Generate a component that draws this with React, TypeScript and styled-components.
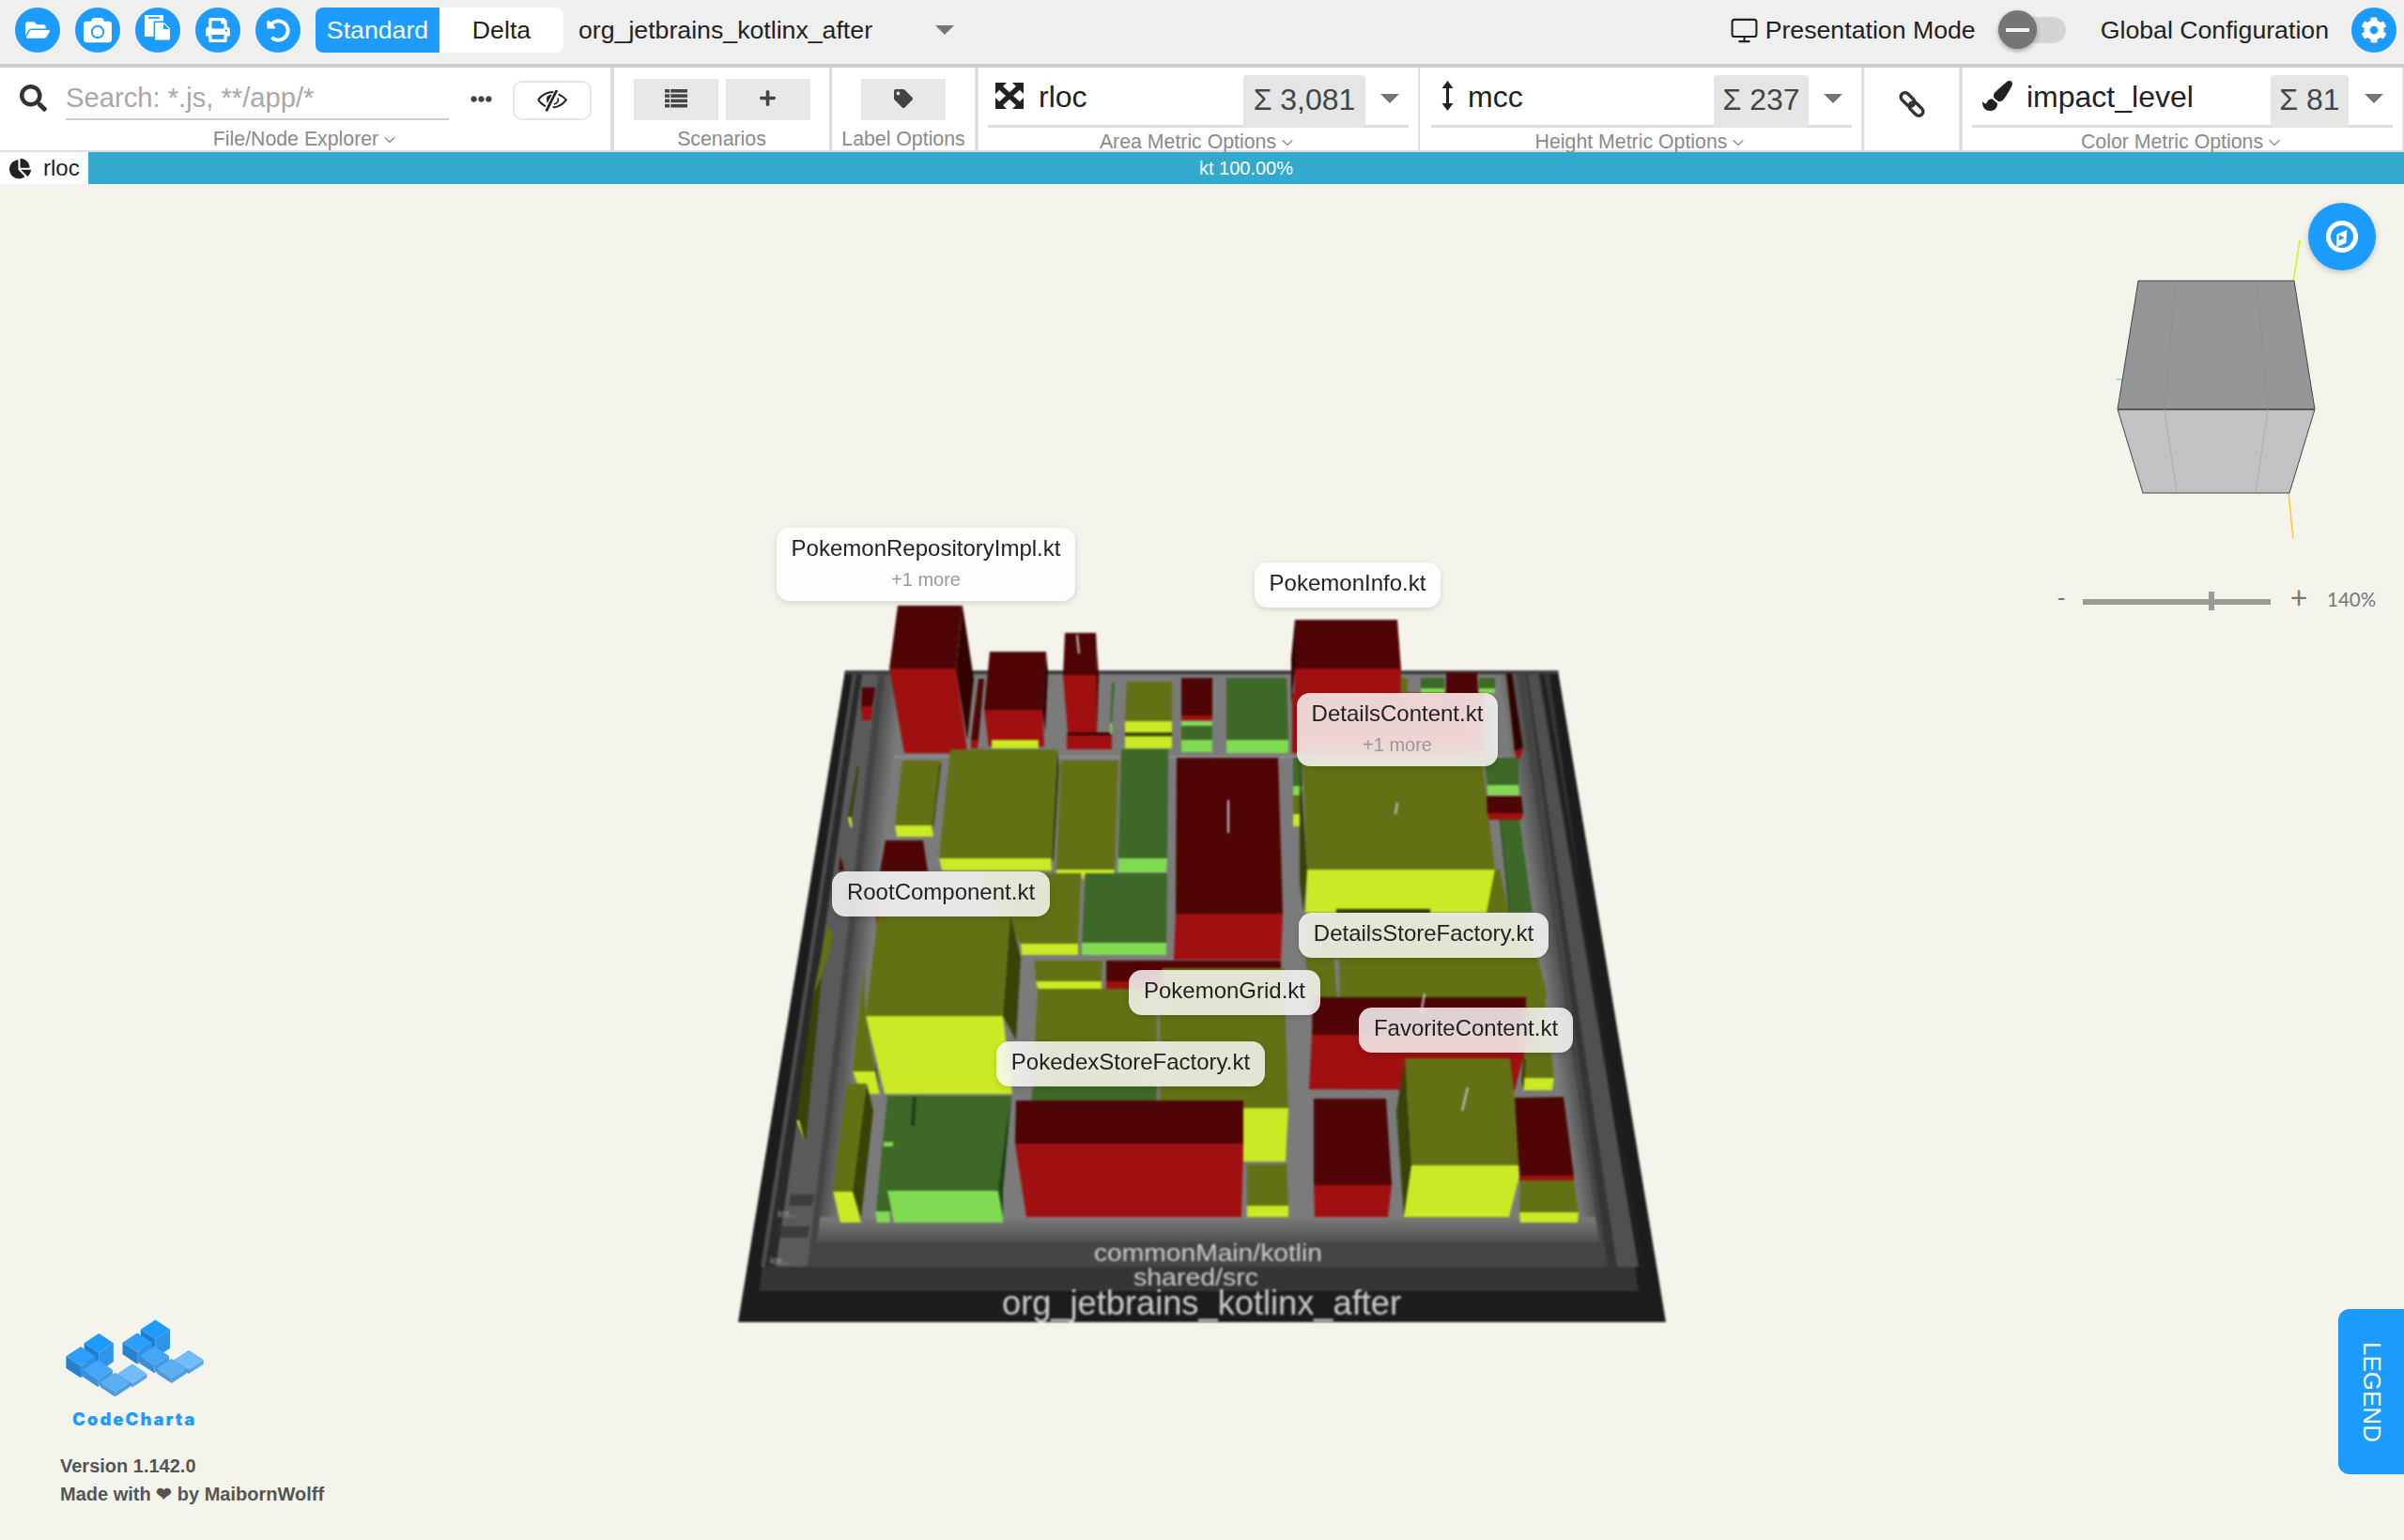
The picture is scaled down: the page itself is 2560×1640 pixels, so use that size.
import React from "react";
import styled, { createGlobalStyle } from "styled-components";
import {
  FaFolderOpen,
  FaCamera,
  FaPrint,
  FaUndoAlt,
  FaCog,
  FaSearch,
  FaEllipsisH,
  FaPlus,
  FaTag,
  FaPaintBrush,
  FaChartPie,
} from "react-icons/fa";
import { ChevronDown, Monitor } from "lucide-react";

const BLUE = "#1c9cff";

const GlobalStyle = createGlobalStyle`
  html, body { margin: 0; padding: 0; background: #f4f4ec; }
  body { font-family: "Liberation Sans", Arial, sans-serif; color: #222; }
  * { box-sizing: border-box; }
`;

const Page = styled.div`
  width: 2560px;
  height: 1640px;
  display: flex;
  flex-direction: column;
  overflow: hidden;
`;

/* ---------- top bar ---------- */
const TopBar = styled.div`
  height: 72px;
  flex: none;
  display: flex;
  align-items: center;
  gap: 16px;
  padding: 0 8px 4px 16px;
  background: #efefef;
  border-bottom: 4px solid #ccc;
`;

const RoundButton = styled.button<{ $size?: number }>`
  width: 48px;
  height: 48px;
  flex: none;
  border: none;
  border-radius: 50%;
  background: ${BLUE};
  color: #fff;
  font-size: ${(p) => p.$size ?? 28}px;
  padding: 0;
  display: flex;
  align-items: center;
  justify-content: center;
`;

const Segment = styled.div`
  display: flex;
  height: 48px;
  width: 264px;
  border-radius: 8px;
  overflow: hidden;
  background: #fff;
`;

const SegmentItem = styled.div<{ $active?: boolean }>`
  width: 132px;
  display: flex;
  align-items: center;
  justify-content: center;
  font-size: 26.7px;
  background: ${(p) => (p.$active ? BLUE : "#fff")};
  color: ${(p) => (p.$active ? "#fff" : "#222")};
`;

const FileSelect = styled.div`
  width: 400px;
  display: flex;
  align-items: center;
  justify-content: space-between;
  font-size: 26.7px;
`;

const Caret = styled.span`
  width: 0;
  height: 0;
  flex: none;
  border-left: 10px solid transparent;
  border-right: 10px solid transparent;
  border-top: 10px solid #757575;
`;

const MetricCaret = styled(Caret)`
  margin: -4px 10px 0 0;
`;

const RightTools = styled.div`
  margin-left: auto;
  display: flex;
  align-items: center;
  font-size: 26.7px;
`;

const PresentationLabel = styled.div`
  display: flex;
  align-items: center;
  gap: 7px;
  margin-right: 24px;
`;

const SwitchTrack = styled.div`
  position: relative;
  width: 72px;
  height: 28px;
  border-radius: 14px;
  background: #d4d4d4;
  margin-right: 37px;
`;

const SwitchThumb = styled.div`
  position: absolute;
  left: 0;
  top: -7px;
  width: 41px;
  height: 41px;
  border-radius: 50%;
  background: #757575;
  box-shadow: 0 2px 5px rgba(0, 0, 0, 0.35);
  display: flex;
  align-items: center;
  justify-content: center;
  &::after {
    content: "";
    width: 25px;
    height: 4px;
    background: #f4f4f4;
  }
`;

const GlobalLabel = styled.div`
  margin-right: 24px;
`;

/* ---------- panel row ---------- */
const PanelRow = styled.div`
  height: 90px;
  flex: none;
  display: flex;
  background: #fff;
  border-bottom: 2px solid #ddd;
`;

const Panel = styled.section<{ $w: number; $border: number; $left?: number; $right?: number }>`
  width: ${(p) => p.$w}px;
  flex: none;
  display: flex;
  flex-direction: column;
  border-right: ${(p) => p.$border}px solid #ddd;
  padding: 0 ${(p) => p.$right ?? 0}px 0 ${(p) => p.$left ?? 0}px;
`;

const Caption = styled.div<{ $low?: boolean }>`
  margin-top: auto;
  height: 24px;
  line-height: 24px;
  margin-bottom: ${(p) => (p.$low ? -3 : 0)}px;
  text-align: center;
  font-size: 21.3px;
  color: #8a8a8a;
  white-space: nowrap;
  svg { margin-left: 2px; vertical-align: -4px; }
`;

const SearchRow = styled.div`
  display: flex;
  align-items: flex-start;
  height: 57px;
  padding-left: 19px;
  padding-top: 16px;
  color: #333;
`;

const SearchGlass = styled.div`
  width: 29px;
  height: 29px;
  margin-top: 2px;
  font-size: 29px;
  line-height: 0;
`;

const SearchField = styled.input`
  width: 408px;
  height: 40px;
  margin: 0 22px 0 20px;
  padding: 0 0 5px 0;
  border: none;
  border-bottom: 2px solid #ccc;
  outline: none;
  background: transparent;
  font: 29.2px "Liberation Sans", Arial, sans-serif;
  &::placeholder { color: #a8a8a8; opacity: 1; }
`;

const DotsIcon = styled.div`
  width: 24px;
  height: 34px;
  font-size: 23px;
  color: #444;
  display: flex;
  align-items: center;
  justify-content: center;
`;

const EyeButton = styled.button`
  width: 84px;
  height: 42px;
  margin: -2px 0 0 22px;
  padding: 0;
  border: 2px solid #e4e4e4;
  border-radius: 10px;
  background: #fff;
  color: #222;
  display: flex;
  align-items: center;
  justify-content: center;
`;

const ButtonRow = styled.div`
  display: flex;
  justify-content: center;
  gap: 8px;
  margin-top: 12px;
`;

const GreyButton = styled.div<{ $size?: number }>`
  width: 90px;
  height: 44px;
  background: #e8e8e8;
  color: #444;
  font-size: ${(p) => p.$size ?? 20}px;
  padding-bottom: 3px;
  display: flex;
  align-items: center;
  justify-content: center;
`;

const MetricHead = styled.div`
  margin-top: 8px;
  height: 56px;
  display: flex;
  align-items: center;
  border-bottom: 3px solid #ddd;
  color: #222;
`;

const MetricIcon = styled.div<{ $w: number; $left: number }>`
  width: ${(p) => p.$w}px;
  margin-left: ${(p) => p.$left}px;
  flex: none;
  display: flex;
  justify-content: center;
  font-size: 32px;
  margin-top: -10px;
`;

const MetricName = styled.div<{ $left: number }>`
  margin-left: ${(p) => p.$left}px;
  margin-top: -6px;
  font-size: 32px;
`;

const SumBox = styled.div<{ $w: number; $right: number }>`
  width: ${(p) => p.$w}px;
  margin: 0 ${(p) => p.$right}px -3px auto;
  height: 56px;
  flex: none;
  padding-bottom: 4px;
  border-radius: 4px 4px 0 0;
  background: #e5e5e5;
  color: #444;
  font-size: 32px;
  display: flex;
  align-items: center;
  justify-content: center;
`;

const LinkIcon = styled.div`
  height: 78px;
  display: flex;
  align-items: center;
  justify-content: center;
`;

/* ---------- status strip ---------- */
const MetricStrip = styled.div`
  height: 34px;
  flex: none;
  display: flex;
  background: #33a9cd;
`;

const StripTab = styled.div`
  width: 94px;
  flex: none;
  display: flex;
  align-items: center;
  gap: 13px;
  padding-left: 10px;
  background: #fff;
  color: #222;
  font-size: 24px;
  svg { font-size: 23px; }
`;

const StripValue = styled.div`
  flex: 1;
  display: flex;
  align-items: center;
  justify-content: center;
  color: #fff;
  font-size: 20px;
`;

/* ---------- canvas ---------- */
const Canvas = styled.main`
  position: relative;
  flex: 1;
  background: #f4f4ec;
`;

const MapDrawing = styled.svg`
  position: absolute;
  inset: 0;
  width: 2560px;
  height: 1444px;
  filter: blur(0.8px);
`;

const CubeDrawing = styled.svg`
  position: absolute;
  inset: 0;
  width: 2560px;
  height: 1444px;
`;

const Bubble = styled.div<{ $x: number; $y: number; $w: number; $h: number }>`
  position: absolute;
  left: ${(p) => p.$x}px;
  top: ${(p) => p.$y - 196}px;
  width: ${(p) => p.$w}px;
  height: ${(p) => p.$h}px;
  border-radius: 14px;
  background: rgba(255, 255, 255, 0.82);
  backdrop-filter: blur(8px);
  box-shadow: 0 2px 6px rgba(0, 0, 0, 0.14);
  display: flex;
  flex-direction: column;
  align-items: center;
  padding-top: 8px;
  font-size: 24px;
  line-height: 28px;
  color: #222;
  white-space: nowrap;
`;

const BubbleMore = styled.div`
  margin-top: 6px;
  font-size: 20px;
  line-height: 26px;
  color: #999;
`;

const CompassButton = styled.button`
  position: absolute;
  right: 30px;
  top: 20px;
  width: 72px;
  height: 72px;
  border: none;
  border-radius: 50%;
  padding: 0;
  background: ${BLUE};
  color: #fff;
  box-shadow: 0 2px 6px rgba(0, 0, 0, 0.22);
  display: flex;
  align-items: center;
  justify-content: center;
`;

const ZoomControl = styled.div`
  position: absolute;
  left: 2186px;
  top: 422px;
  width: 360px;
  height: 40px;
  display: flex;
  align-items: center;
  font-family: Lato, sans-serif;
  color: #777;
`;

const ZoomSign = styled.span<{ $w: number; $size: number }>`
  width: ${(p) => p.$w}px;
  font-size: ${(p) => p.$size}px;
  line-height: 40px;
  text-align: center;
  margin-top: -4px;
`;

const ZoomTrack = styled.div`
  position: relative;
  width: 200px;
  height: 6px;
  margin: 6px 18px 0 14px;
  background: #9a9a94;
`;

const ZoomThumb = styled.div`
  position: absolute;
  left: 134px;
  top: -8px;
  width: 6px;
  height: 20px;
  background: #9a9a94;
`;

const ZoomValue = styled.span`
  margin-left: 18px;
  font-size: 20.5px;
`;

const Logo = styled.div`
  position: absolute;
  left: 64px;
  top: 1206px;
  width: 300px;
`;

const LogoMark = styled.svg`
  display: block;
  margin-left: 3px;
  width: 153px;
  height: 90px;
`;

const LogoName = styled.div`
  margin: 8px 0 0 13px;
  font-family: Inter, sans-serif;
  font-weight: 900;
  font-size: 18.5px;
  letter-spacing: 2px;
  color: ${BLUE};
`;

const Credits = styled.div`
  margin-top: 24px;
  font-size: 20px;
  font-weight: bold;
  line-height: 30px;
  color: #555;
  white-space: nowrap;
`;

const LegendTab = styled.div`
  position: absolute;
  right: 0;
  top: 1198px;
  width: 70px;
  height: 176px;
  border-radius: 12px 0 0 12px;
  background: ${BLUE};
  color: #fff;
  font-size: 26px;
  writing-mode: vertical-rl;
  display: flex;
  align-items: center;
  justify-content: center;
`;

/* ---------- icons that differ from the packaged sets ---------- */
const FilesIcon = () => (
  <svg width="48" height="48" viewBox="0 0 48 48">
    <rect x="10" y="8" width="20" height="23" fill="#fff" />
    <rect x="14" y="10" width="12" height="1.7" fill={BLUE} />
    <polygon points="20.3,15.3 31,15.3 37.7,22 37.7,35.3 20.3,35.3" fill="#fff" stroke={BLUE} strokeWidth="1.4" />
    <polygon points="30,17 36,23 30,23" fill={BLUE} />
    <polygon points="20.8,15.8 21.6,35 37.4,35" fill="none" stroke="#fff" strokeWidth="0" />
  </svg>
);

const EyeSlashIcon = () => (
  <svg width="32" height="24" viewBox="0 0 96 72">
    <g fill="none" stroke="#222" strokeWidth="6">
      <path d="M3 34 C15 18 32 9 52 9" />
      <path d="M3 34 C10 44 18 50 27 55" />
      <path d="M68 16 C79 21 88 28 93 34 C82 48 66 58 50 58" />
      <path d="M66 28 C70 38 66 44 54 48" strokeWidth="5" />
    </g>
    <path d="M30 32 C30 22 38 17 47 17 L32 46 Z" fill="#222" />
    <path d="M63 3 L29 70" stroke="#222" strokeWidth="8" />
  </svg>
);

const ListIcon = () => (
  <svg width="24" height="20" viewBox="0 0 24 20" fill="currentColor">
    {[0, 5.3, 10.6, 15.9].map((y) => (
      <g key={y}>
        <rect x="0" y={y} width="5" height="3.6" />
        <rect x="6.2" y={y} width="17.8" height="3.6" />
      </g>
    ))}
  </svg>
);

const ArrowsAltIcon = () => (
  <svg width="30" height="28" viewBox="0 0 30 28" fill="#222">
    <polygon points="0,0 12,0 0,12" />
    <polygon points="30,0 18,0 30,12" />
    <polygon points="0,28 12,28 0,16" />
    <polygon points="30,28 18,28 30,16" />
    <path d="M3 3 L27 25 M27 3 L3 25" stroke="#222" strokeWidth="5.5" />
  </svg>
);

const ArrowsVIcon = () => (
  <svg width="13" height="32" viewBox="0 0 13 32" fill="#222">
    <polygon points="6.5,0 12.5,8 0.5,8" />
    <polygon points="6.5,32 12.5,24 0.5,24" />
    <rect x="5" y="7" width="3" height="18" />
  </svg>
);

const ChainIcon = () => (
  <svg width="30" height="30" viewBox="0 0 30 30" fill="none" stroke="#333" strokeWidth="3.4">
    <rect x="2" y="5.5" width="17" height="9" rx="4.5" transform="rotate(45 10.5 10)" />
    <rect x="11" y="15.5" width="17" height="9" rx="4.5" transform="rotate(45 19.5 20)" />
  </svg>
);

const CompassIcon = () => (
  <svg width="36" height="36" viewBox="-18 -18 36 36">
    <circle r="14.5" fill="none" stroke="#fff" strokeWidth="5" />
    <polygon points="5.3,-7.3 4.3,6.7 -5.7,11 -5.7,-2.3" fill="#fff" />
    <polygon points="-3.3,-1.7 2.7,1 -3.3,4.3" fill={BLUE} />
  </svg>
);

/* ---------- treemap data, page coordinates ---------- */
const DR = "#4f0505";
const RD = "#a01010";
const RS = "#300300";
const OL = "#647014";
const YL = "#c9ea24";
const OS = "#3a4208";
const GR = "#3d6827";
const LG = "#80da52";
const GS = "#1f4014";

const floor: [string, string][] = [
  ["#1c1c1c", "900,714 1659,714 1774,1408 786,1408"],
  ["#3e3e3e", "900,714 1659,714 1660,718 899,718"],
  ["#353535", "908,718 1650,718 1745,1375 808,1375"],
  ["#4d4d4d", "908,718 912,718 815,1349 810,1349"],
  ["#2a2a2a", "912,718 918,718 826,1349 815,1349"],
  ["#5a5a5a", "918,718 938,718 860,1349 826,1349"],
  ["#3d3d3d", "842,1272 868,1272 864,1284 840,1284"],
  ["#3d3d3d", "832,1306 862,1306 860,1318 830,1318"],
  ["#454545", "935,718 1625,718 1712,1349 860,1349"],
  ["#505050", "1627,718 1638,718 1745,1349 1722,1349"],
  ["#1f1f1f", "1640,718 1644,718 1752,1349 1746,1349"],
  ["url(#floorFade)", "943,718 1615,718 1703,1323 870,1323"],
  ["url(#leftFade)", "943,718 970,718 900,1296 873,1296"],
  ["url(#rightFade)", "1590,718 1615,718 1699,1296 1674,1296"],
];

const blocks: [string, string][] = [
  // far row
  [DR, "956,645 1025,645 1018,712 947,712"],
  [RS, "1025,645 1037,723 1030,788 1018,712"],
  [RD, "947,712 1018,712 1030,802 963,802"],
  [DR, "1042,723 1048,723 1042,788 1034,788"],
  [RD, "1034,788 1042,788 1041,797 1034,797"],
  [RS, "1114,694 1116,715 1113,780 1110,756"],
  [DR, "1054,694 1114,694 1110,756 1048,756"],
  [RD, "1048,756 1110,756 1112,795 1053,795"],
  [YL, "1056,788 1106,788 1106,797 1056,797"],
  [RS, "1167,674 1170,720 1168,780 1168,719"],
  [DR, "1134,674 1167,674 1168,719 1132,719"],
  [RD, "1132,719 1168,719 1168,780 1137,780"],
  [RS, "1137,780 1183,780 1184,783 1136,783"],
  [RD, "1136,783 1184,783 1184,798 1136,798"],
  [GR, "1184,727 1187,727 1184,770 1182,770"],
  [LG, "1182,770 1184,770 1184,782 1182,782"],
  [OL, "1200,726 1248,726 1248,768 1198,768"],
  [YL, "1198,768 1248,768 1248,780 1198,780"],
  [OS, "1198,780 1248,780 1248,784 1198,784"],
  [YL, "1198,784 1248,784 1248,797 1198,797"],
  [DR, "1258,722 1291,722 1291,762 1258,762"],
  [RD, "1258,762 1291,762 1291,767 1258,767"],
  [LG, "1258,768 1291,768 1291,773 1258,773"],
  [GR, "1258,773 1291,773 1291,788 1258,788"],
  [LG, "1258,788 1291,788 1291,801 1258,801"],
  [GR, "1306,722 1370,722 1372,788 1306,788"],
  [LG, "1306,788 1372,788 1372,802 1306,802"],
  [RD, "1376,738 1580,738 1582,802 1376,802"],
  [OL, "1492,722 1499,722 1499,738 1492,738"],
  [GR, "1513,722 1538,722 1538,733 1513,733"],
  [LG, "1513,733 1538,733 1538,738 1513,738"],
  [GR, "1575,722 1592,722 1592,733 1575,733"],
  [LG, "1575,733 1592,733 1592,738 1575,738"],
  [DR, "1540,716 1573,716 1574,740 1540,740"],
  [RS, "1379,660 1375,700 1375,750 1379,712"],
  [DR, "1379,660 1488,660 1492,712 1379,712"],
  [RD, "1379,712 1492,712 1490,802 1376,802"],
  [RS, "1604,717 1610,717 1622,797 1613,800"],
  [RD, "1613,800 1622,796 1619,807 1616,810"],

  // second row
  [DR, "1253,807 1361,807 1366,973 1252,973"],
  [RD, "1252,973 1366,973 1364,1022 1250,1022"],
  [OL, "961,810 1001,810 993,879 953,879"],
  [OS, "1001,810 1002,816 994,882 993,879"],
  [YL, "953,879 992,879 994,891 955,891"],
  [OS, "1126,798 1128,818 1122,917 1120,914"],
  [OL, "1012,798 1126,798 1120,914 1000,914"],
  [YL, "1000,914 1119,914 1120,927 1003,927"],
  [OL, "1130,810 1191,810 1187,926 1125,926"],
  [YL, "1125,926 1187,926 1186,930 1125,930"],
  [GR, "1194,798 1244,798 1243,914 1191,914"],
  [LG, "1191,914 1243,914 1242,929 1190,929"],
  [OL, "1040,930 1151,930 1148,1005 1087,1005"],
  [YL, "1087,1005 1148,1005 1148,1017 1088,1017"],
  [YL, "1151,930 1156,930 1153,938"],
  [GR, "1156,930 1243,930 1242,1004 1152,1004"],
  [LG, "1152,1004 1242,1004 1242,1017 1152,1017"],
  [DR, "943,895 983,895 988,928 937,928"],
  [RD, "932,960 936,960 934,992"],

  // details column
  [GR, "1377,807 1387,807 1387,837 1377,837"],
  [LG, "1377,837 1387,837 1387,847 1377,847"],
  [OL, "1377,847 1385,847 1384,867 1377,867"],
  [YL, "1377,867 1384,867 1384,880 1377,880"],
  [OS, "1384,807 1392,926 1388,972 1384,940"],
  [OL, "1387,807 1578,807 1592,926 1392,926"],
  [OL, "1590,926 1597,926 1607,972 1583,972"],
  [YL, "1392,926 1592,926 1583,972 1390,972"],
  [OS, "1423,968 1523,968 1523,973 1423,973"],
  [GR, "1580,807 1617,807 1617,836 1584,836"],
  [LG, "1584,836 1617,836 1618,847 1584,847"],
  [DR, "1583,848 1620,848 1622,866 1584,866"],
  [RD, "1584,866 1622,866 1620,873 1586,873"],
  [GS, "1597,873 1600,873 1610,972 1607,972"],
  [GR, "1598,873 1618,873 1632,972 1608,972"],
  [OL, "1390,975 1620,975 1636,1020 1395,1022"],
  [OL, "1390,1020 1420,1020 1424,1062 1396,1062"],
  [OL, "1426,1020 1638,1020 1648,1063 1427,1063"],
  [OL, "1620,1063 1645,1063 1655,1148 1623,1148"],
  [YL, "1623,1148 1655,1148 1653,1161 1622,1161"],
  [OS, "1622,1125 1625,1130 1622,1161 1620,1150"],

  // middle
  [DR, "1102,1023 1174,1023 1174,1030 1102,1030"],
  [OL, "1102,1023 1174,1023 1173,1045 1103,1045"],
  [YL, "1103,1045 1173,1045 1173,1053 1106,1056"],
  [DR, "1178,1023 1364,1023 1364,1031 1178,1031"],
  [DR, "1178,1031 1238,1031 1238,1045 1178,1045"],
  [RD, "1178,1045 1238,1045 1238,1053 1178,1053"],
  [OL, "1105,1053 1232,1053 1232,1157 1100,1157"],
  [OL, "1238,1031 1367,1031 1372,1180 1324,1180 1324,1172 1235,1172 1235,1053"],
  [GR, "1100,1157 1232,1157 1232,1172 1098,1172"],
  [YL, "1324,1180 1372,1180 1369,1237 1324,1237"],

  // big root file
  [OS, "1076,975 1087,1020 1082,1108 1068,1082"],
  [OL, "935,975 1076,975 1068,1082 922,1082"],
  [OL, "920,1030 922,1082 932,1141 908,1141"],
  [YL, "922,1082 1068,1082 1078,1165 942,1165"],
  [YL, "908,1141 932,1141 937,1165 917,1165"],
  [OS, "932,1130 937,1165 932,1141"],

  // left slivers
  [DR, "918,732 932,732 929,752 917,752"],
  [RD, "917,752 929,752 928,767 918,767"],
  [OS, "913,815 915,817 907,870 903,870"],
  [YL, "903,870 906,870 908,881 905,880"],
  [DR, "895,912 899,927 893,927"],
  [OL, "881,983 888,998 875,1040 866,1060"],
  [OS, "866,1060 875,1040 858,1215 848,1193"],
  [YL, "848,1193 851,1193 857,1215"],

  // front row
  [OS, "923,1154 930,1183 917,1297 908,1269"],
  [OL, "902,1154 923,1154 908,1269 887,1269"],
  [YL, "887,1269 908,1269 917,1302 895,1302"],
  [GR, "945,1167 1077,1167 1068,1268 935,1268"],
  [GR, "935,1268 945,1268 950,1290 933,1290"],
  [LG, "932,1290 947,1290 948,1302 934,1302"],
  [LG, "945,1268 1068,1268 1068,1302 952,1302"],
  [GS, "1077,1167 1072,1200 1063,1268 1068,1296 1068,1268"],
  [GS, "972,1168 976,1168 974,1199 970,1199"],
  [LG, "941,1216 951,1216 951,1221 941,1221"],
  [DR, "1082,1172 1324,1172 1324,1218 1081,1218"],
  [RD, "1081,1218 1324,1218 1322,1296 1093,1296"],
  [OL, "1328,1240 1370,1240 1372,1284 1328,1284"],
  [YL, "1328,1284 1372,1284 1372,1296 1328,1296"],

  // favorite group
  [DR, "1398,1062 1625,1062 1625,1102 1397,1102"],
  [RD, "1397,1102 1625,1102 1623,1123 1613,1161 1394,1160"],
  [DR, "1399,1170 1476,1170 1482,1262 1399,1262"],
  [RD, "1399,1262 1482,1262 1478,1296 1400,1296"],
  [OS, "1496,1127 1487,1183 1495,1296 1503,1241"],
  [OL, "1496,1127 1608,1127 1621,1241 1503,1241"],
  [YL, "1503,1241 1621,1241 1607,1296 1495,1296"],
  [DR, "1613,1169 1665,1168 1676,1252 1618,1252"],
  [RD, "1618,1252 1676,1252 1676,1257 1618,1257"],
  [OL, "1619,1257 1676,1257 1681,1291 1618,1291"],
  [YL, "1618,1291 1681,1291 1680,1302 1619,1302"],
];

const ticks = [
  "1308,852 1308,887",
  "1488,855 1486,867",
  "1147,676 1149,696",
  "1563,1158 1557,1183",
  "1517,1058 1513,1080",
];

const labels = [
  { name: "PokemonRepositoryImpl.kt", x: 827, y: 562, w: 318, h: 78, more: true },
  { name: "PokemonInfo.kt", x: 1336, y: 599, w: 198, h: 48 },
  { name: "DetailsContent.kt", x: 1381, y: 738, w: 214, h: 78, more: true },
  { name: "RootComponent.kt", x: 886, y: 928, w: 232, h: 48 },
  { name: "DetailsStoreFactory.kt", x: 1383, y: 972, w: 266, h: 48 },
  { name: "PokemonGrid.kt", x: 1202, y: 1033, w: 204, h: 48 },
  { name: "PokedexStoreFactory.kt", x: 1061, y: 1109, w: 286, h: 48 },
  { name: "FavoriteContent.kt", x: 1447, y: 1073, w: 228, h: 48 },
];

const logoCubes: [number, number, number, string, string, string][] = [
  [225, 155, 60, "#1c9cff", "#1b7fd2", "#3093e6"],
  [167, 197, 38, "#2f9fff", "#2882cb", "#2f93e6"],
  [332, 252, 14, "#73bcfc", "#4a93d4", "#5aa5ea"],
  [222, 240, 24, "#44a6f9", "#3a8fd8", "#3f98e3"],
  [277, 280, 16, "#5cadf2", "#4b9adf", "#4d9fe5"],
];

const LogoCube = ({ c, dx, dy }: { c: (typeof logoCubes)[number]; dx: number; dy: number }) => {
  const [cx0, cy0, d, top, left, right] = c;
  const cx = cx0 + dx;
  const cy = cy0 + dy;
  const w = 47;
  const h = 31;
  return (
    <g>
      <polygon fill={left} points={`${cx - w},${cy} ${cx},${cy + h} ${cx},${cy + h + d} ${cx - w},${cy + d}`} />
      <polygon fill={right} points={`${cx + w},${cy} ${cx},${cy + h} ${cx},${cy + h + d} ${cx + w},${cy + d}`} />
      <polygon fill={top} points={`${cx - w},${cy} ${cx},${cy - h} ${cx + w},${cy} ${cx},${cy + h}`} />
    </g>
  );
};

const Metric = ({ icon, iconW, iconLeft, name, nameLeft, sum, sumW, sumRight }: any) => (
  <MetricHead>
    <MetricIcon $w={iconW} $left={iconLeft}>
      {icon}
    </MetricIcon>
    <MetricName $left={nameLeft}>{name}</MetricName>
    <SumBox $w={sumW} $right={sumRight}>
      {sum}
    </SumBox>
    <MetricCaret />
  </MetricHead>
);

const App = () => {
  return (
    <Page>
      <GlobalStyle />
      <TopBar>
        <RoundButton $size={26}>
          <FaFolderOpen />
        </RoundButton>
        <RoundButton $size={30}>
          <FaCamera />
        </RoundButton>
        <RoundButton>
          <FilesIcon />
        </RoundButton>
        <RoundButton $size={26}>
          <FaPrint />
        </RoundButton>
        <RoundButton $size={25}>
          <FaUndoAlt />
        </RoundButton>
        <Segment>
          <SegmentItem $active>Standard</SegmentItem>
          <SegmentItem>Delta</SegmentItem>
        </Segment>
        <FileSelect>
          org_jetbrains_kotlinx_after
          <Caret />
        </FileSelect>
        <RightTools>
          <PresentationLabel>
            <Monitor size={31} strokeWidth={1.6} />
            Presentation Mode
          </PresentationLabel>
          <SwitchTrack>
            <SwitchThumb />
          </SwitchTrack>
          <GlobalLabel>Global Configuration</GlobalLabel>
          <RoundButton>
            <FaCog />
          </RoundButton>
        </RightTools>
      </TopBar>

      <PanelRow>
        <Panel $w={654} $border={4} $left={2}>
          <SearchRow>
            <SearchGlass>
              <FaSearch />
            </SearchGlass>
            <SearchField placeholder="Search: *.js, **/app/*" />
            <DotsIcon>
              <FaEllipsisH />
            </DotsIcon>
            <EyeButton>
              <EyeSlashIcon />
            </EyeButton>
          </SearchRow>
          <Caption>
            File/Node Explorer
            <ChevronDown size={20} strokeWidth={1.4} />
          </Caption>
        </Panel>
        <Panel $w={232} $border={3}>
          <ButtonRow>
            <GreyButton>
              <ListIcon />
            </GreyButton>
            <GreyButton $size={19}>
              <FaPlus />
            </GreyButton>
          </ButtonRow>
          <Caption>Scenarios</Caption>
        </Panel>
        <Panel $w={156} $border={4}>
          <ButtonRow>
            <GreyButton>
              <FaTag />
            </GreyButton>
          </ButtonRow>
          <Caption>Label Options</Caption>
        </Panel>
        <Panel $w={470} $border={2} $left={10} $right={10}>
          <Metric icon={<ArrowsAltIcon />} iconW={30} iconLeft={8} name="rloc" nameLeft={16} sum="Σ 3,081" sumW={130} sumRight={16} />
          <Caption $low>
            Area Metric Options
            <ChevronDown size={20} strokeWidth={1.4} />
          </Caption>
        </Panel>
        <Panel $w={473} $border={3} $left={12} $right={10}>
          <Metric icon={<ArrowsVIcon />} iconW={18} iconLeft={8} name="mcc" nameLeft={13} sum="Σ 237" sumW={101} sumRight={16} />
          <Caption $low>
            Height Metric Options
            <ChevronDown size={20} strokeWidth={1.4} />
          </Caption>
        </Panel>
        <Panel $w={105} $border={4}>
          <LinkIcon>
            <ChainIcon />
          </LinkIcon>
        </Panel>
        <Panel $w={470} $border={2} $left={10} $right={10}>
          <Metric icon={<FaPaintBrush />} iconW={34} iconLeft={10} name="impact_level" nameLeft={14} sum="Σ 81" sumW={83} sumRight={17} />
          <Caption $low>
            Color Metric Options
            <ChevronDown size={20} strokeWidth={1.4} />
          </Caption>
        </Panel>
      </PanelRow>

      <MetricStrip>
        <StripTab>
          <FaChartPie />
          rloc
        </StripTab>
        <StripValue>kt 100.00%</StripValue>
      </MetricStrip>

      <Canvas>
        <MapDrawing viewBox="0 196 2560 1444">
          <defs>
            <linearGradient id="floorFade" gradientUnits="userSpaceOnUse" x1="0" y1="1296" x2="0" y2="1323">
              <stop offset="0" stopColor="#7b7b7b" />
              <stop offset="1" stopColor="#505050" />
            </linearGradient>
            <linearGradient id="leftFade" gradientUnits="userSpaceOnUse" x1="943" y1="718" x2="963" y2="720.4">
              <stop offset="0" stopColor="#505050" />
              <stop offset="1" stopColor="#7b7b7b" />
            </linearGradient>
            <linearGradient id="rightFade" gradientUnits="userSpaceOnUse" x1="1615" y1="718" x2="1595" y2="721">
              <stop offset="0" stopColor="#505050" />
              <stop offset="1" stopColor="#7b7b7b" />
            </linearGradient>
          </defs>
          {floor.map(([fill, points], i) => (
            <polygon key={i} fill={fill} points={points} />
          ))}
          <line x1="952" y1="806" x2="1600" y2="806" stroke="#8f8f8f" strokeWidth="2" />
          {blocks.map(([fill, points], i) => (
            <polygon key={i} fill={fill} points={points} />
          ))}
          {ticks.map((t, i) => {
            const [a, b] = t.split(" ");
            const [x1, y1] = a.split(",");
            const [x2, y2] = b.split(",");
            return <line key={i} x1={x1} y1={y1} x2={x2} y2={y2} stroke="#c9c9c9" strokeWidth="2" />;
          })}
          <g fontFamily="Liberation Sans, Arial, sans-serif" fill="#cfcfcf">
            <text x="1165" y="1343" fontSize="25" textLength="243" lengthAdjust="spacingAndGlyphs">
              commonMain/kotlin
            </text>
            <text x="1207" y="1369" fontSize="25" textLength="133" lengthAdjust="spacingAndGlyphs">
              shared/src
            </text>
            <text x="1067" y="1400" fontSize="36" textLength="425" lengthAdjust="spacingAndGlyphs">
              org_jetbrains_kotlinx_after
            </text>
            <text x="828" y="1296" fontSize="10" fill="#a5a5a5">
              ios...
            </text>
            <text x="820" y="1346" fontSize="10" fill="#a5a5a5">
              ios...
            </text>
          </g>
        </MapDrawing>

        <CubeDrawing viewBox="0 196 2560 1444">
          <line x1="2449" y1="256" x2="2442" y2="300" stroke="#c8ff00" strokeWidth="1.5" />
          <line x1="2437" y1="525" x2="2442" y2="573" stroke="#ffc62a" strokeWidth="1.5" />
          <line x1="2254" y1="404" x2="2260" y2="404" stroke="#5fdcf5" strokeWidth="1.5" />
          <polygon points="2277,299 2443,299 2465,436 2255,436" fill="#959698" stroke="#444" strokeWidth="1" />
          <polygon points="2255,436 2465,436 2438,525 2282,525" fill="#c2c2c4" stroke="#444" strokeWidth="1" />
          <line x1="2255" y1="436" x2="2465" y2="436" stroke="#555" strokeWidth="1.5" />
          <g stroke="#868688" strokeWidth="0.5">
            <line x1="2316" y1="305" x2="2305" y2="436" />
            <line x1="2404" y1="305" x2="2415" y2="436" />
          </g>
          <g stroke="#a0a0a2" strokeWidth="0.7">
            <line x1="2305" y1="436" x2="2318" y2="525" />
            <line x1="2415" y1="436" x2="2402" y2="525" />
          </g>
        </CubeDrawing>

        {labels.map((l) => (
          <Bubble key={l.name} $x={l.x} $y={l.y} $w={l.w} $h={l.h}>
            {l.name}
            {l.more && <BubbleMore>+1 more</BubbleMore>}
          </Bubble>
        ))}

        <CompassButton>
          <CompassIcon />
        </CompassButton>

        <ZoomControl>
          <ZoomSign $w={18} $size={26}>
            -
          </ZoomSign>
          <ZoomTrack>
            <ZoomThumb />
          </ZoomTrack>
          <ZoomSign $w={24} $size={32}>
            +
          </ZoomSign>
          <ZoomValue>140%</ZoomValue>
        </ZoomControl>

        <Logo>
          <LogoMark viewBox="110 70 460 270">
            {logoCubes.map((c, i) => (
              <LogoCube key={i} c={c} dx={181} dy={-44} />
            ))}
            {logoCubes.map((c, i) => (
              <LogoCube key={i} c={c} dx={0} dy={0} />
            ))}
          </LogoMark>
          <LogoName>CodeCharta</LogoName>
          <Credits>
            Version 1.142.0
            <br />
            Made with ❤ by MaibornWolff
          </Credits>
        </Logo>

        <LegendTab>LEGEND</LegendTab>
      </Canvas>
    </Page>
  );
};

export default App;
